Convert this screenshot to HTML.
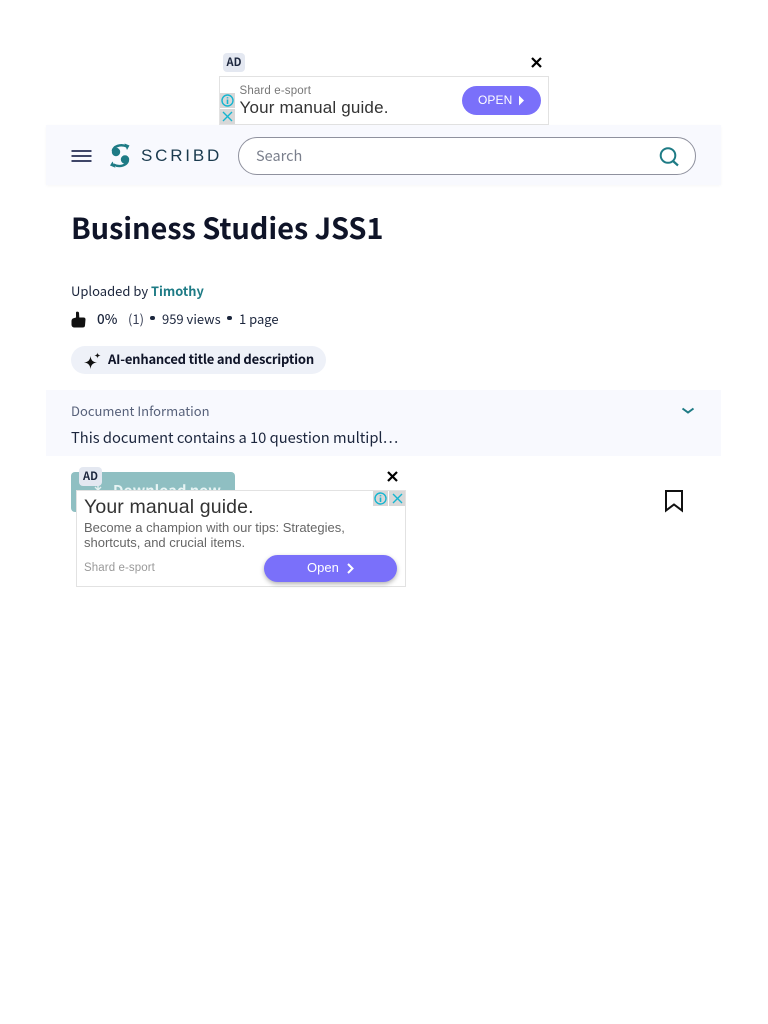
<!DOCTYPE html>
<html lang="en">
<head>
<meta charset="utf-8">
<title>Business Studies JSS1</title>
<style>
html,body{margin:0;padding:0;background:#fff}
body{width:768px;height:1024px;position:relative;overflow:hidden;font-family:"Noto Sans CJK JP","Liberation Sans",sans-serif;color:#1c263d}
.a{position:absolute;white-space:nowrap}
.g{font-family:"Liberation Sans",sans-serif}
svg{position:absolute;display:block}
</style>
</head>
<body>
<!-- top ad -->
<div class="a" style="left:223px;top:53px;width:22px;height:19px;background:#e4e8f1;border-radius:4px;font-size:11px;font-weight:700;line-height:18px;text-align:center;color:#1c263d">AD</div>
<svg style="left:530px;top:56px" width="13" height="13" viewBox="0 0 13 13"><path d="M2 2L11 11M11 2L2 11" stroke="#000" stroke-width="2.2" fill="none"/></svg>
<div class="a" style="left:219px;top:76px;width:330px;height:49px;box-sizing:border-box;border:1px solid #e2e2e2;background:#fff"></div>
<div class="a" style="left:220px;top:93px;width:15px;height:15px;background:#d8d8d8"></div>
<div class="a" style="left:220px;top:109px;width:15px;height:15px;background:#d8d8d8"></div>
<svg style="left:220px;top:93px" width="15" height="31" viewBox="0 0 15 31"><circle cx="7.5" cy="7.5" r="5.5" fill="none" stroke="#16b5d0" stroke-width="1.4"/><path d="M7.5 6.5V11M7.5 4.2V5.4" stroke="#16b5d0" stroke-width="1.6"/><path d="M3 19L12 28M12 19L3 28" stroke="#16b5d0" stroke-width="1.4" fill="none"/></svg>
<div class="a g" style="left:239.500px;top:83.500px;font-size:11.500px;line-height:15px;letter-spacing:.15px;color:#777">Shard e-sport</div>
<div class="a g" style="left:239.500px;top:97px;font-size:17px;line-height:21px;letter-spacing:.18px;color:#333">Your manual guide.</div>
<div class="a" style="left:462px;top:86px;width:79px;height:29px;border-radius:15px;background:#7a70fa"></div>
<div class="a g" style="left:478px;top:92px;font-size:12px;line-height:16px;letter-spacing:.1px;color:#fff">OPEN</div>
<svg style="left:518px;top:95px" width="8" height="11" viewBox="0 0 8 11"><path d="M1 0.500L6 5.500L1 10.500Z" fill="#fff"/></svg>

<!-- header -->
<div class="a" style="left:46px;top:125px;width:675px;height:60px;background:#f8f9fe;box-shadow:0 1px 3px rgba(0,0,0,.03)"></div>
<svg style="left:71px;top:149px" width="22" height="14" viewBox="0 0 22 14"><path d="M0.500 2H20.500M0.500 7H20.500M0.500 12H20.500" stroke="#3f4668" stroke-width="2" fill="none"/></svg>
<svg style="left:109px;top:143px" width="22" height="26" viewBox="0 0 22 26"><circle cx="7" cy="9" r="4.200" fill="#1e7b85"/><path d="M3.800 8C4.500 3.500 11 .5 18 3.500" stroke="#1e7b85" stroke-width="2.400" fill="none"/><path d="M15.500 .5L20.500 2.500L18 7Z" fill="#1e7b85"/><circle cx="16" cy="16.500" r="4.200" fill="#1e7b85"/><path d="M19 17.500C18 22 11 25 4.500 21.500" stroke="#1e7b85" stroke-width="2.400" fill="none"/><path d="M6.500 24.800L1 22.500L3.500 18.500Z" fill="#1e7b85"/></svg>
<div class="a g" style="left:141px;top:145px;font-size:17px;line-height:22px;letter-spacing:2.800px;color:#1a3a4e">SCRIBD</div>
<div class="a" style="left:238px;top:137px;width:458px;height:38px;box-sizing:border-box;border:1px solid #8f919e;border-radius:19px;background:#fff"></div>
<div class="a" style="left:256px;top:145px;font-size:14.500px;line-height:21px;color:#7a7f8c">Search</div>
<svg style="left:658px;top:146px" width="22" height="22" viewBox="0 0 22 22"><circle cx="10" cy="9.500" r="7.300" fill="none" stroke="#1e7b85" stroke-width="2"/><path d="M15 15L20 19.500" stroke="#1e7b85" stroke-width="2.200" fill="none"/></svg>

<!-- title -->
<div class="a" style="left:71px;top:207px;font-size:29px;line-height:40px;font-weight:700;color:#0f1428;letter-spacing:-.1px">Business Studies JSS1</div>
<div class="a" style="left:71px;top:281px;font-size:13px;line-height:19px;color:#1c263d">Uploaded by <span style="color:#1e7b85;font-weight:700;font-size:12.800px">Timothy</span></div>
<svg style="left:71px;top:311px" width="15" height="17" viewBox="0 0 15 17"><path d="M5 1.500C5 .3 7.700 .2 8 1.800L8.300 6.500H12.500C14 6.500 14.600 7.500 14.500 8.500L14 14.500C13.800 16 13 16.500 11.500 16.500H3.500C1.500 16.500 .5 15.200 .5 13.500V10C.5 8.500 1.500 7.500 2.500 7.300L5 6.500Z" fill="#111"/></svg>
<div class="a" style="left:97px;top:309px;font-size:13.500px;line-height:19px;font-weight:500;color:#1c263d">0%</div>
<div class="a" style="left:128px;top:309px;font-size:13px;line-height:19px;color:#3b4258">(1)</div>
<div class="a" style="left:150px;top:315.500px;width:4.500px;height:4.500px;border-radius:50%;background:#1c263d"></div>
<div class="a" style="left:162px;top:309px;font-size:13px;line-height:19px;color:#1c263d">959 views</div>
<div class="a" style="left:227px;top:315.500px;width:4.500px;height:4.500px;border-radius:50%;background:#1c263d"></div>
<div class="a" style="left:239px;top:309px;font-size:13px;line-height:19px;color:#1c263d">1 page</div>

<div class="a" style="left:71px;top:346px;width:255px;height:28px;border-radius:14px;background:#eef1f8"></div>
<svg style="left:84px;top:352px" width="17" height="17" viewBox="0 0 17 17"><path d="M6.500 4C7 8 8.500 10 13 10.500C8.500 11 7 13 6.500 17C6 13 4.500 11 0 10.500C4.500 10 6 8 6.500 4Z" fill="#111"/><path d="M13.500 .5C13.700 2.300 14.300 3 16.500 3.500C14.300 4 13.700 4.700 13.500 6.500C13.300 4.700 12.700 4 10.500 3.500C12.700 3 13.300 2.300 13.500 .5Z" fill="#111"/></svg>
<div class="a" style="left:108px;top:349px;font-size:13px;line-height:19px;font-weight:700;color:#0f1428;letter-spacing:-.2px">AI-enhanced title and description</div>

<!-- doc info -->
<div class="a" style="left:46px;top:389.500px;width:675px;height:66.500px;background:#f8f9fe"></div>
<div class="a" style="left:71px;top:401px;font-size:13px;line-height:19px;color:#57617a">Document Information</div>
<svg style="left:681px;top:407px" width="14" height="8" viewBox="0 0 14 8"><path d="M1.500 1.500L7 5.500L12.500 1.500" stroke="#1e7b85" stroke-width="2" fill="none"/></svg>
<div class="a" style="left:71px;top:427px;font-size:14.700px;line-height:21px;color:#1c263d">This document contains a 10 question multipl…</div>

<!-- download button + ad -->
<div class="a" style="left:71px;top:471.500px;width:164px;height:40px;border-radius:4px;background:#8fbfc2"></div>
<svg style="left:92px;top:484px" width="12" height="8" viewBox="0 0 12 8"><path d="M6 0V6M3 3L6 6L9 3" stroke="#e4f1f1" stroke-width="1.400" fill="none"/></svg>
<div class="a" style="left:113px;top:480.500px;font-size:14.700px;line-height:20px;font-weight:700;color:#e8f4f4">Download now</div>
<div class="a" style="left:79px;top:467px;width:23px;height:19px;background:#e4e8f1;border-radius:4px;font-size:11px;font-weight:700;line-height:18px;text-align:center;color:#1c263d">AD</div>
<svg style="left:386px;top:470px" width="13" height="13" viewBox="0 0 13 13"><path d="M2 2L11 11M11 2L2 11" stroke="#000" stroke-width="2.200" fill="none"/></svg>
<div class="a" style="left:76px;top:490px;width:330px;height:97px;box-sizing:border-box;border:1px solid #e2e2e2;background:#fff"></div>
<div class="a" style="left:373px;top:491px;width:15px;height:15px;background:#d8d8d8"></div>
<div class="a" style="left:389px;top:491px;width:16px;height:15px;background:#d8d8d8"></div>
<svg style="left:373px;top:491px" width="32" height="15" viewBox="0 0 32 15"><circle cx="7.500" cy="7.500" r="5.500" fill="none" stroke="#16b5d0" stroke-width="1.400"/><path d="M7.500 6.500V11M7.500 4.200V5.400" stroke="#16b5d0" stroke-width="1.600"/><path d="M20 3L29 12M29 3L20 12" stroke="#16b5d0" stroke-width="1.400" fill="none"/></svg>
<div class="a g" style="left:84px;top:496px;font-size:19.500px;line-height:23px;letter-spacing:.13px;color:#333">Your manual guide.</div>
<div class="a g" style="left:84px;top:521px;font-size:13px;line-height:14.500px;color:#666">Become a champion with our tips: Strategies,<br>shortcuts, and crucial items.</div>
<div class="a g" style="left:84px;top:561px;font-size:11.500px;line-height:14px;letter-spacing:.1px;color:#999">Shard e-sport</div>
<div class="a" style="left:264px;top:555px;width:133px;height:27px;border-radius:14px;background:#7a70fa;box-shadow:0 2px 5px rgba(0,0,0,.3)"></div>
<div class="a g" style="left:307px;top:560px;font-size:13px;line-height:16px;color:#fff">Open</div>
<svg style="left:346px;top:563px" width="9" height="11" viewBox="0 0 9 11"><path d="M2 1L6.500 5.500L2 10" stroke="#fff" stroke-width="2" fill="none"/></svg>

<!-- bookmark -->
<svg style="left:664px;top:489px" width="20" height="24" viewBox="0 0 20 24"><path d="M2 2H18V21.500L10 15.500L2 21.500Z" fill="#fff" stroke="#111" stroke-width="2"/></svg>
</body>
</html>
